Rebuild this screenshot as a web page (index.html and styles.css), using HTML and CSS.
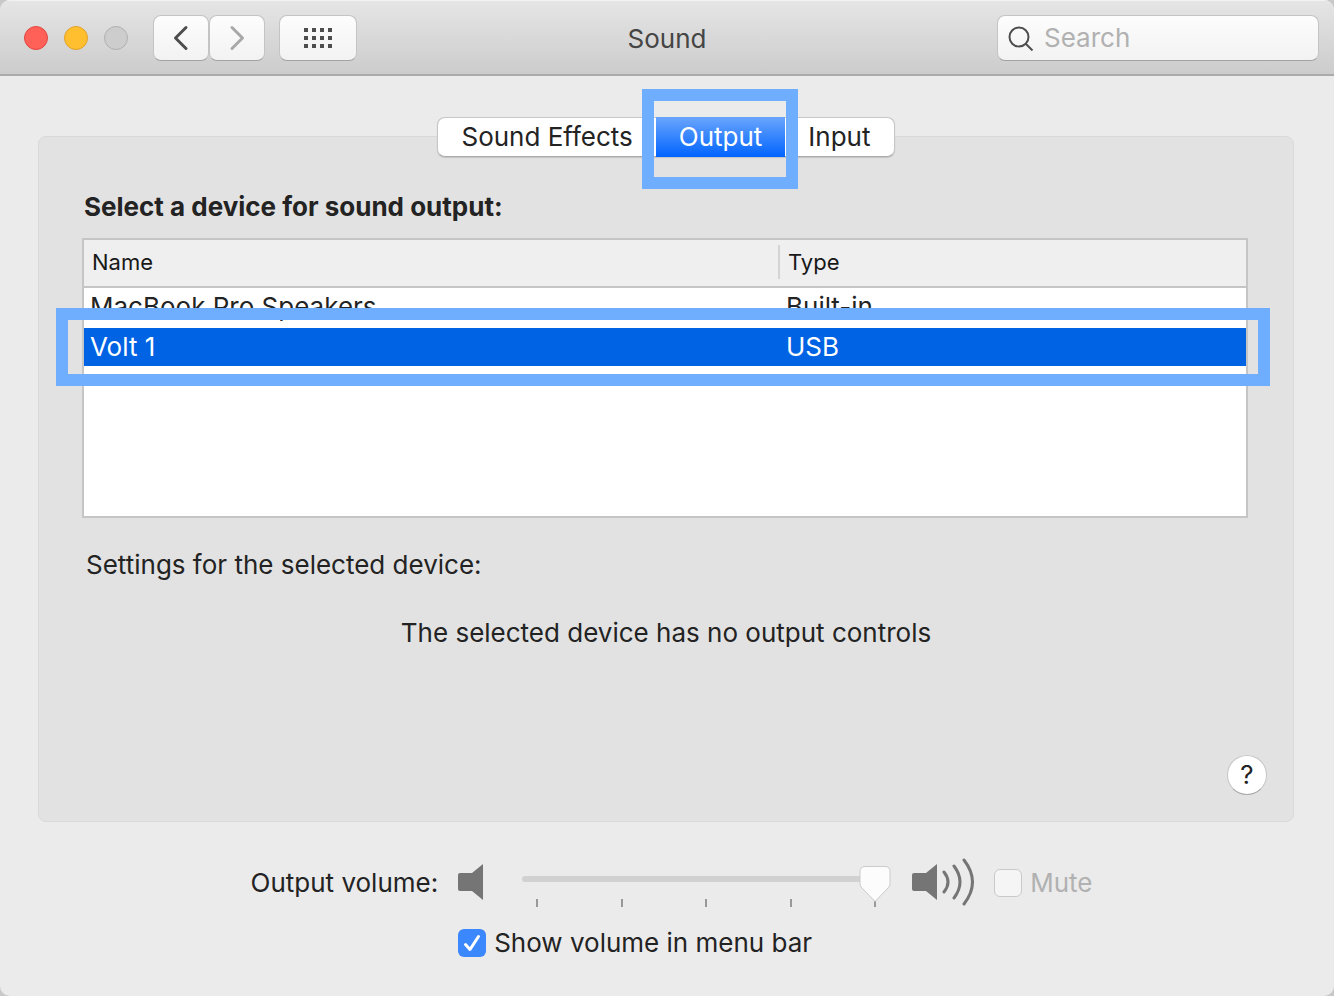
FILE: index.html
```html
<!DOCTYPE html>
<html lang="en">
<head>
<meta charset="utf-8">
<meta name="viewport" content="width=device-width, initial-scale=1">
<title>Sound</title>
<link rel="stylesheet" href="styles.css">
</head>
<body>
<div class="backdrop">
<div class="window">
  <header class="titlebar">
    <div class="toolbar">
      <div class="lights">
        <button class="light light-close" aria-label="Close"></button>
        <button class="light light-minimize" aria-label="Minimize"></button>
        <button class="light light-zoom" aria-label="Zoom" disabled></button>
      </div>
      <div class="nav">
        <button class="tool" aria-label="Back">
          <svg width="16" height="26" viewBox="0 0 16 26"><path d="M13 2.500 2.500 13 13 23.500" fill="none" stroke="#4d4d4d" stroke-width="3" stroke-linecap="round" stroke-linejoin="round"/></svg>
        </button>
        <button class="tool" aria-label="Forward" disabled>
          <svg width="16" height="26" viewBox="0 0 16 26"><path d="M3 2.500 13.500 13 3 23.500" fill="none" stroke="#a8a8a8" stroke-width="3" stroke-linecap="round" stroke-linejoin="round"/></svg>
        </button>
      </div>
      <button class="tool tool-wide" aria-label="Show all">
        <svg width="28" height="20" viewBox="0 0 28 20" fill="#4d4d4d"><path d="M0 0h4v4h-4zM8 0h4v4h-4zM16 0h4v4h-4zM24 0h4v4h-4zM0 8h4v4h-4zM8 8h4v4h-4zM16 8h4v4h-4zM24 8h4v4h-4zM0 16h4v4h-4zM8 16h4v4h-4zM16 16h4v4h-4zM24 16h4v4h-4z"/></svg>
      </button>
    </div>
    <h1 class="title">Sound</h1>
    <label class="search">
      <svg width="26" height="26" viewBox="0 0 26 26" fill="none" stroke="#4d4d4d" stroke-width="2"><circle cx="11" cy="12" r="9.500"/><path d="M17.500 18.500 24.500 25.500"/></svg>
      <input type="search" placeholder="Search" aria-label="Search">
    </label>
  </header>

  <main class="content">
    <nav class="tabs">
      <button class="tab">Sound Effects</button>
      <button class="tab tab-active">Output<span class="callout callout-tab"></span></button>
      <button class="tab">Input</button>
    </nav>

    <section class="panel">
      <h2 class="heading">Select a device for sound output:</h2>
      <div class="devices">
        <table class="device-table">
          <thead>
            <tr><th class="col-name">Name</th><th><span class="divided">Type</span></th></tr>
          </thead>
          <tbody>
            <tr><td>MacBook Pro Speakers</td><td>Built-in</td></tr>
            <tr class="selected"><td>Volt 1<span class="callout callout-row"></span></td><td>USB</td></tr>
          </tbody>
        </table>
      </div>
      <p class="settings-label">Settings for the selected device:</p>
      <p class="settings-empty">The selected device has no output controls</p>
      <button class="help" aria-label="Help">?</button>
    </section>

    <footer class="volume">
      <label class="volume-label" for="volume">Output volume:</label>
      <div class="volume-row">
        <svg class="speaker" width="26" height="36" viewBox="0 0 26 36" fill="#757575"><path d="M2 9h12L25 0v36L14 27H2q-2 0-2-2V11q0-2 2-2z"/></svg>
        <div class="slider">
          <input id="volume" type="range" min="0" max="4" value="4">
          <div class="ticks"><i></i><i></i><i></i><i></i><i></i></div>
        </div>
        <svg class="speaker" width="64" height="48" viewBox="0 0 64 48" fill="#757575"><path d="M2 15h12L25 6v36L14 33H2q-2 0-2-2V17q0-2 2-2z"/><path d="M32 14Q40 24 32 34M42 8Q54 24 42 40M52 2Q69 24 52 46" fill="none" stroke="#757575" stroke-width="3" stroke-linecap="round"/></svg>
        <label class="check check-off"><input type="checkbox" disabled>Mute</label>
      </div>
      <label class="check check-menubar"><input type="checkbox" checked>Show volume in menu bar</label>
    </footer>
  </main>
</div>
</div>
</body>
</html>
```
FILE: styles.css
```css
* { box-sizing: border-box; }

body {
  margin: 0 2px 4px 0;
  background: #fff;
  color: #232323;
  font: 26px/32px Inter, "Liberation Sans", sans-serif;
}

h1, h2, p { margin: 0; font-size: inherit; font-weight: inherit; }

button, input {
  margin: 0;
  padding: 0;
  border: 0;
  color: inherit;
  font: inherit;
}

svg { display: block; flex: none; }

.backdrop { background: #c8c8c8; }

.window {
  overflow: hidden;
  border-radius: 10px;
  background: #ebebeb;
}

/* Title bar */
.titlebar {
  display: grid;
  grid-template-columns: 1fr auto 1fr;
  align-items: center;
  height: 76px;
  padding: 0 15px;
  border-top: 1px solid #f2f2f2;
  border-bottom: 2px solid #ababab;
  background: linear-gradient(#e5e5e5, #cccccc);
}

.toolbar { display: flex; align-items: center; }

.lights { display: flex; gap: 16px; margin: 0 25px 0 9px; }

.light {
  width: 24px;
  height: 24px;
  border: 1px solid;
  border-radius: 50%;
}

.light-close { border-color: #e2463f; background: #ff6058; }
.light-minimize { border-color: #e1a12b; background: #ffbf2f; }
.light-zoom { border-color: #b0b0b0; background: #cdcdcd; }

.nav { display: flex; margin-right: 14px; }

.tool {
  display: flex;
  align-items: center;
  justify-content: center;
  width: 56px;
  height: 46px;
  border: 1px solid #c4c4c4;
  border-bottom-color: #a3a3a3;
  border-radius: 8px;
  background: linear-gradient(#fdfdfd, #f2f2f2);
}

.tool-wide { width: 78px; }

.title { padding-top: 2px; color: #454545; }

.search {
  display: flex;
  align-items: center;
  gap: 10px;
  justify-self: end;
  width: 322px;
  height: 46px;
  padding: 0 10px;
  border: 1px solid #c4c4c4;
  border-bottom-color: #a3a3a3;
  border-radius: 8px;
  background: linear-gradient(#fdfdfd, #f2f2f2);
}

.search input {
  flex: 1;
  min-width: 0;
  background: none;
  appearance: none;
}

.search input::placeholder { color: #b1b1b1; }

/* Tabs */
.content { padding: 41px 40px 37px 38px; }

.tabs {
  position: relative;
  z-index: 1;
  display: flex;
  align-items: center;
  width: max-content;
  height: 40px;
  margin: 0 auto -21px;
  border: 1px solid #c6c6c6;
  border-bottom-color: #ababab;
  border-radius: 8px;
  background: #fff;
  box-shadow: 0 1px 1px #c4c4c4;
}

.tab {
  flex: none;
  height: 38px;
  padding: 0 23px;
  background: none;
}

.tab-active {
  position: relative;
  height: 40px;
  background: linear-gradient(#6aa5fc, #0164ff);
  color: #fff;
}

/* Blue frames drawn over the controls to use */
.callout {
  position: absolute;
  z-index: 2;
  border: 12px solid #6faeff;
  pointer-events: none;
}

.callout-tab { inset: -28px -13px -32px -14px; }
.callout-row { inset: -20px -24px -20px -28px; }

/* Panel */
.panel {
  display: flex;
  flex-direction: column;
  padding: 54px 26px 26px 43px;
  border: 1px solid #d9d9d9;
  border-radius: 8px;
  background: #e2e2e2;
}

.heading { padding-left: 2px; font-weight: 700; }

.devices {
  min-height: 280px;
  margin: 15px 19px 0 0;
  border: 2px solid #c5c5c5;
  background: #fff;
}

.device-table {
  width: 100%;
  border-collapse: separate;
  border-spacing: 0;
  table-layout: fixed;
}

.device-table th {
  height: 48px;
  padding: 0 8px 2px;
  border-bottom: 2px solid #c5c5c5;
  background: #efefef;
  color: #181818;
  font-size: 22px;
  font-weight: 400;
  text-align: left;
}

.device-table th:last-child { padding-left: 0; }

.device-table .col-name { width: 694px; }

.divided {
  display: block;
  padding-left: 8px;
  border-left: 2px solid #d4d4d4;
  line-height: 34px;
}

.device-table td { height: 38px; padding: 0 6px; }

.device-table td:last-child { padding-left: 8px; }

.device-table tbody tr:first-child td { height: 40px; padding-bottom: 2px; }

.selected { position: relative; background: #0063e3; color: #fff; }

.settings-label { margin-top: 31px; padding-left: 4px; }
.settings-empty { margin-top: 36px; padding-right: 17px; text-align: center; }

.help {
  align-self: flex-end;
  width: 40px;
  height: 40px;
  margin-top: 106px;
  border: 1px solid #c6c6c6;
  border-bottom-color: #a8a8a8;
  border-radius: 50%;
  background: #fff;
}

/* Volume */
.volume {
  display: grid;
  grid-template-columns: auto auto;
  align-items: center;
  justify-content: center;
  column-gap: 20px;
  row-gap: 19px;
  padding: 36px 0 0 11px;
}

.volume-row { display: flex; align-items: center; height: 50px; }

.speaker { margin-bottom: 2px; }

.slider { margin: 0 20px 0 38px; }

.slider input {
  position: relative;
  display: block;
  width: 370px;
  height: 40px;
  background: none;
  appearance: none;
}

.slider input::-webkit-slider-runnable-track {
  height: 6px;
  border-radius: 3px;
  background: linear-gradient(#d1d1d1, #d1d1d1) 0 0 / calc(100% - 10px) 100% no-repeat;
}

.slider input::-webkit-slider-thumb {
  width: 34px;
  height: 40px;
  margin-top: -11px;
  appearance: none;
  background: url("data:image/svg+xml,%3Csvg xmlns='http://www.w3.org/2000/svg' width='34' height='40'%3E%3Cpath d='M7 1.500H27Q32 1.500 32 6.500V19Q32 21 30 23L17 36.500 4 23Q2 21 2 19V6.500Q2 1.500 7 1.500Z' fill='%23fcfcfc' stroke='%23cbcbcb'/%3E%3C/svg%3E");
}

.ticks {
  display: flex;
  justify-content: space-between;
  padding: 0 16px 0 14px;
}

.ticks i { width: 2px; height: 8px; background: #999; }

.check { display: flex; align-items: center; gap: 8px; }

.check input {
  width: 28px;
  height: 28px;
  border-radius: 6px;
  appearance: none;
}

.check input:checked {
  background: #3b87fd url("data:image/svg+xml,%3Csvg xmlns='http://www.w3.org/2000/svg' width='28' height='28'%3E%3Cpath d='M7.500 15.500 12 20.500 20.500 7.500' fill='none' stroke='white' stroke-width='3' stroke-linecap='round' stroke-linejoin='round'/%3E%3C/svg%3E");
}

.check-off { margin-left: 18px; color: #b1b1b1; }
.check-off input { border: 1px solid #c9c9c9; background: #f5f5f5; }
.check-menubar { grid-column: 2; }
```
